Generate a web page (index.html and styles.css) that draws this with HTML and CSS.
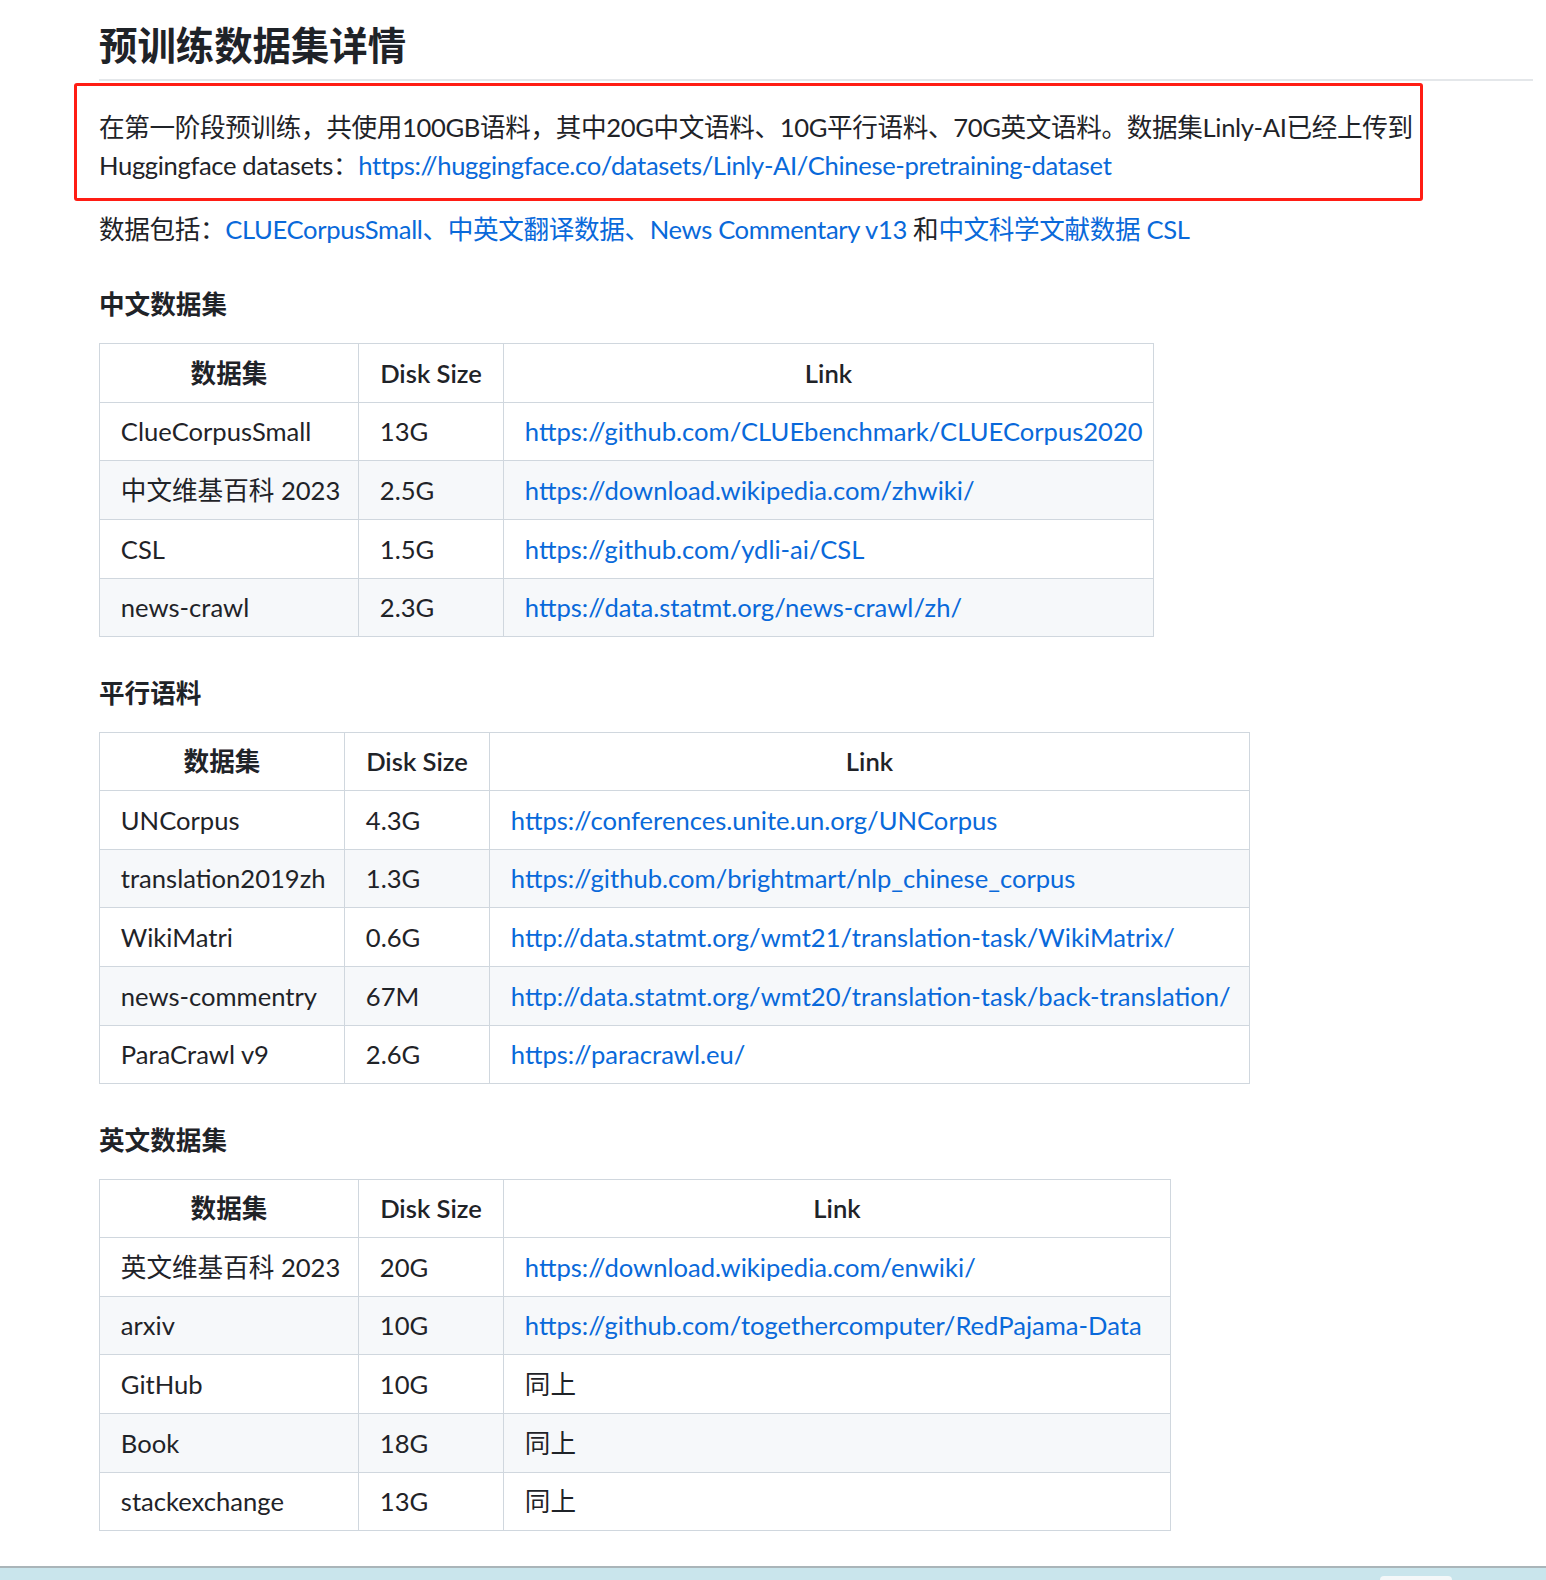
FILE: index.html
```html
<!DOCTYPE html>
<html lang="zh-CN">
<head>
<meta charset="utf-8">
<title>预训练数据集详情</title>
<link rel="stylesheet" href="styles.css">
</head>
<body>
<main class="page">
  <article class="markdown">
    <h2 class="title">预训练数据集详情</h2>
    <p class="boxed">在第一阶段预训练，共使用100GB语料，其中20G中文语料、10G平行语料、70G英文语料。数据集Linly-AI已经上传到 Huggingface datasets：<a href="#">https://huggingface.co/datasets/Linly-AI/Chinese-pretraining-dataset</a></p>
    <p class="tight">数据包括：<a href="#">CLUECorpusSmall、</a><a href="#">中英文翻译数据、</a><a href="#">News Commentary v13</a> 和<a href="#">中文科学文献数据 CSL</a></p>

    <h3 class="sub">中文数据集</h3>
    <table class="data t1">
      <colgroup><col class="c1"><col class="c2"><col class="c3"></colgroup>
      <thead><tr><th>数据集</th><th>Disk Size</th><th>Link</th></tr></thead>
      <tbody>
        <tr><td>ClueCorpusSmall</td><td>13G</td><td><a href="#">https://github.com/CLUEbenchmark/CLUECorpus2020</a></td></tr>
        <tr><td>中文维基百科 2023</td><td>2.5G</td><td><a href="#">https://download.wikipedia.com/zhwiki/</a></td></tr>
        <tr><td>CSL</td><td>1.5G</td><td><a href="#">https://github.com/ydli-ai/CSL</a></td></tr>
        <tr><td>news-crawl</td><td>2.3G</td><td><a href="#">https://data.statmt.org/news-crawl/zh/</a></td></tr>
      </tbody>
    </table>

    <h3 class="sub">平行语料</h3>
    <table class="data t2">
      <colgroup><col class="c1"><col class="c2"><col class="c3"></colgroup>
      <thead><tr><th>数据集</th><th>Disk Size</th><th>Link</th></tr></thead>
      <tbody>
        <tr><td>UNCorpus</td><td>4.3G</td><td><a href="#">https://conferences.unite.un.org/UNCorpus</a></td></tr>
        <tr><td>translation2019zh</td><td>1.3G</td><td><a href="#">https://github.com/brightmart/nlp_chinese_corpus</a></td></tr>
        <tr><td>WikiMatri</td><td>0.6G</td><td><a href="#">http://data.statmt.org/wmt21/translation-task/WikiMatrix/</a></td></tr>
        <tr><td>news-commentry</td><td>67M</td><td><a href="#">http://data.statmt.org/wmt20/translation-task/back-translation/</a></td></tr>
        <tr><td>ParaCrawl v9</td><td>2.6G</td><td><a href="#">https://paracrawl.eu/</a></td></tr>
      </tbody>
    </table>

    <h3 class="sub">英文数据集</h3>
    <table class="data t3">
      <colgroup><col class="c1"><col class="c2"><col class="c3"></colgroup>
      <thead><tr><th>数据集</th><th>Disk Size</th><th>Link</th></tr></thead>
      <tbody>
        <tr><td>英文维基百科 2023</td><td>20G</td><td><a href="#">https://download.wikipedia.com/enwiki/</a></td></tr>
        <tr><td>arxiv</td><td>10G</td><td><a href="#">https://github.com/togethercomputer/RedPajama-Data</a></td></tr>
        <tr><td>GitHub</td><td>10G</td><td>同上</td></tr>
        <tr><td>Book</td><td>18G</td><td>同上</td></tr>
        <tr><td>stackexchange</td><td>13G</td><td>同上</td></tr>
      </tbody>
    </table>
  </article>
  <footer class="bottom-bar"><span class="bar-tab"></span></footer>
</main>
</body>
</html>
```

FILE: styles.css
```css
* { box-sizing: border-box; }

html, body {
  margin: 0;
  padding: 0;
  background: #ffffff;
}

body {
  font-family: Lato, "Noto Sans CJK SC", sans-serif;
  color: #1f2328;
  font-size: 25.6px;
  line-height: 1.5;
  overflow: hidden;
}

.page {
  width: 1546px;
  height: 1580px;
  display: flex;
  flex-direction: column;
}

.markdown {
  flex: 1;
  padding: 0 13px 0 99px;
}

.markdown a {
  color: #0969da;
  text-decoration: none;
}

.title {
  margin: 21px 0 27px;
  padding-bottom: 10px;
  font-size: 38.4px;
  line-height: 1.25;
  font-weight: 700;
  border-bottom: 2px solid #e4e7ea;
}

.markdown p {
  margin: 0 0 25.6px;
}

.boxed,
.tight {
  letter-spacing: -0.35px;
}

.boxed {
  position: relative;
}

.boxed::before {
  content: "";
  position: absolute;
  left: -25px;
  top: -25px;
  width: 1343px;
  height: 112px;
  border: 3px solid #ff1d14;
  border-radius: 3px;
  pointer-events: none;
}

.sub {
  margin: 40.5px 0 22px;
  font-size: 25.6px;
  line-height: 1.25;
  font-weight: 700;
}

.data {
  border-collapse: collapse;
  border-spacing: 0;
  table-layout: fixed;
  margin: 0 0 25.6px;
}

.data th,
.data td {
  border: 1.6px solid #d0d7de;
  padding: 9.6px 20.8px;
  white-space: nowrap;
  text-align: left;
}

.data th {
  font-weight: 600;
  text-align: center;
  height: 57.5px;
}

.data td {
  height: 58.6px;
}

.data tbody tr:nth-child(even) {
  background: #f6f8fa;
}

.t1 { width: 1055px; }
.t1 .c1 { width: 259px; }
.t1 .c2 { width: 145px; }

.t2 { width: 1151px; }
.t2 .c1 { width: 245px; }
.t2 .c2 { width: 145px; }

.t3 { width: 1072px; }
.t3 .c1 { width: 259px; }
.t3 .c2 { width: 145px; }

.bottom-bar {
  height: 14px;
  border-top: 2px solid #aab5b9;
  background: #c9e5ec;
  position: relative;
}

.bar-tab {
  position: absolute;
  left: 1380px;
  top: 8px;
  width: 72px;
  height: 10px;
  background: #f4f8f9;
  border-radius: 4px 4px 0 0;
}
```
